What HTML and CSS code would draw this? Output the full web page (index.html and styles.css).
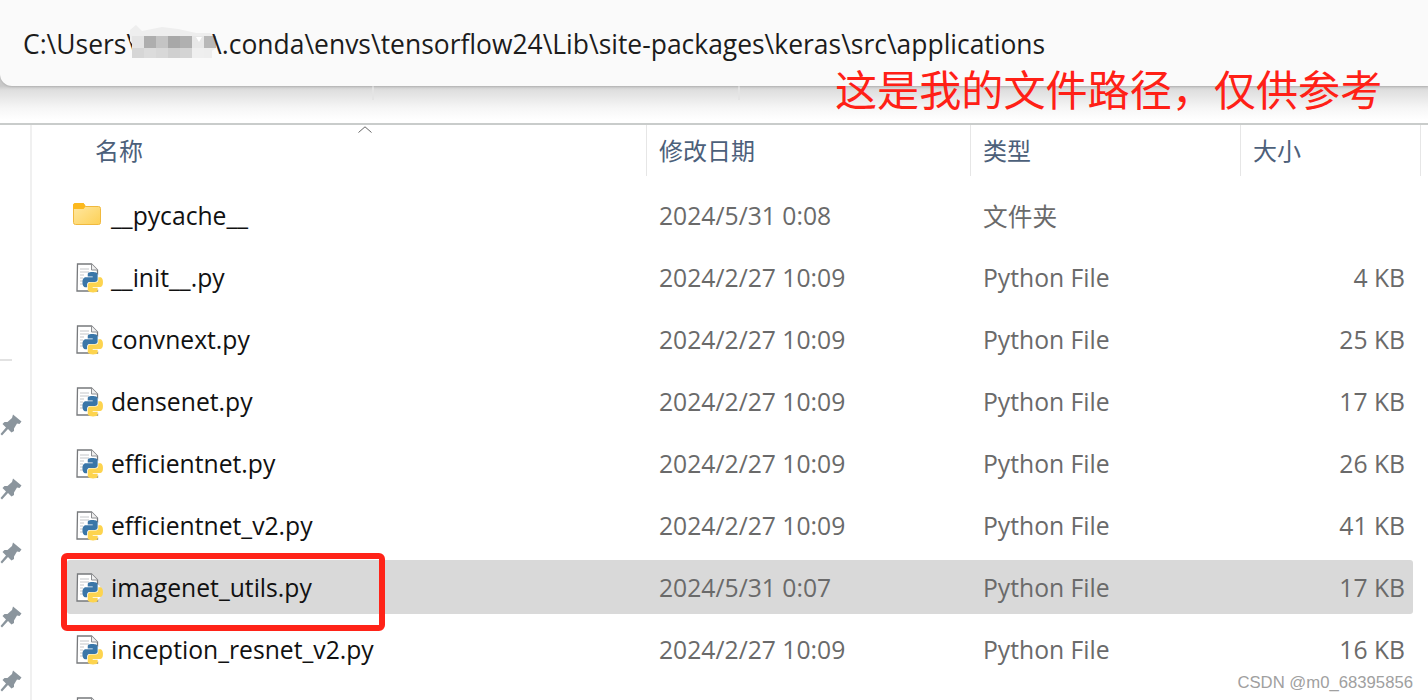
FILE: index.html
```html
<!DOCTYPE html>
<html lang="zh-CN">
<head>
<meta charset="utf-8">
<title>applications</title>
<link rel="stylesheet" href="styles.css">
</head>
<body>
<svg class="defs" width="0" height="0" aria-hidden="true">
  <symbol id="py" viewBox="0 0 27 30">
    <path d="M1.5 1h14l6 6v21h-20.500z" fill="#fff" stroke="#77797c" stroke-width="1.300"/>
    <path d="M15.500 1v6h6" fill="#eee" stroke="#8d8f92" stroke-width="1"/>
    <path d="M4 6h9M4 9h9M4 12h4M4 15h3M4 18h3M4 21h3" stroke="#c4c6c9" stroke-width="1"/>
    <g transform="translate(6.500 9) scale(.85)">
      <path fill="#fff" stroke="#fff" stroke-width="2" d="M2 12a10 10 0 1 0 20 0a10 10 0 1 0-20 0"/>
      <path fill="#3a76a8" d="M14.250.18l.9.2.73.26.59.3.45.32.34.34.25.34.16.33.1.3.04.26.02.2-.01.13V8.500l-.05.63-.13.55-.21.46-.26.38-.3.31-.33.25-.35.19-.35.14-.33.1-.3.07-.26.04-.21.02H8.770l-.69.05-.59.14-.5.22-.41.27-.33.32-.27.35-.2.36-.15.37-.1.35-.07.32-.04.27-.02.21v3.060H3.170l-.21-.03-.28-.07-.32-.12-.35-.18-.36-.26-.36-.36-.35-.46-.32-.59-.28-.73-.21-.88-.14-1.050-.05-1.230.06-1.220.16-1.040.24-.87.32-.71.36-.57.4-.44.42-.33.42-.24.4-.16.36-.1.32-.05.24-.01h.16l.06.01h8.160v-.83H6.180l-.01-2.750-.02-.37.05-.34.11-.31.17-.28.25-.26.31-.23.38-.2.44-.18.51-.15.58-.12.64-.1.71-.06.77-.04.84-.02 1.270.05z"/>
      <path fill="#fdd44f" d="M21.040 6.110l.28.06.32.12.35.18.36.27.36.35.35.47.32.59.28.73.21.88.14 1.040.05 1.230-.06 1.230-.16 1.040-.24.86-.32.71-.36.57-.4.45-.42.33-.42.24-.4.16-.36.09-.32.05-.24.02-.16-.01h-8.220v.82h5.840l.01 2.760.02.36-.05.34-.11.31-.17.29-.25.25-.31.24-.38.2-.44.17-.51.15-.58.13-.64.09-.71.07-.77.04-.84.01-1.270-.04-1.070-.14-.9-.2-.73-.25-.59-.3-.45-.33-.34-.34-.25-.34-.16-.33-.1-.3-.04-.25-.02-.2.01-.13v-5.340l.05-.64.13-.54.21-.46.26-.38.3-.32.33-.24.35-.2.35-.14.33-.1.3-.06.26-.04.21-.02.13-.01h5.840l.69-.05.59-.14.5-.21.41-.28.33-.32.27-.35.2-.36.15-.36.1-.35.07-.32.04-.28.02-.21V6.070h2.090z"/>
    </g>
  </symbol>
  <symbol id="pin" viewBox="0 0 22 22">
    <path d="M13 .5L21.500 7.500L19.500 10L17 9.500L14 14.500L14 17L11.500 18.500L8 15L2 21.500L.5 20L6 13.500L2.500 10L4.500 8L7.500 8L12 4Z" fill="#8b959d"/>
  </symbol>
  <linearGradient id="folderfill" x1="0" y1="0" x2="1" y2="1">
    <stop offset="0" stop-color="#ffe9a6"/>
    <stop offset="1" stop-color="#fdd055"/>
  </linearGradient>
</svg>

<header class="top">
  <div class="address">
    <span class="path">C:\Users\<svg class="mosaic" viewBox="0 0 92 38" aria-hidden="true">
      <path d="M2 6L8 1l6 6 20-4 16 2 18 4 14 0 6 5v10l-6 4-24 3-10 2-22 0-16-4-8-12z" fill="#eeeeee"/>
      <rect x="4" y="12" width="12" height="12" fill="#e4e4e4"/>
      <rect x="16" y="12" width="12" height="12" fill="#aeaeae"/>
      <rect x="28" y="12" width="12" height="12" fill="#c4c4c4"/>
      <rect x="40" y="12" width="12" height="12" fill="#a8a8a8"/>
      <rect x="52" y="12" width="12" height="12" fill="#b0b0b0"/>
      <rect x="64" y="12" width="12" height="12" fill="#e8e8e8"/>
      <rect x="76" y="12" width="12" height="12" fill="#b8b8b8"/>
      <rect x="4" y="24" width="12" height="10" fill="#d6d6d6"/>
      <rect x="16" y="24" width="12" height="10" fill="#dcdcdc"/>
      <rect x="28" y="24" width="12" height="10" fill="#d8d8d8"/>
      <rect x="40" y="24" width="12" height="10" fill="#d0d0d0"/>
      <rect x="52" y="24" width="12" height="10" fill="#d4d4d4"/>
      <rect x="64" y="24" width="12" height="10" fill="#efefef"/>
      <rect x="76" y="24" width="8" height="10" fill="#eeeeee"/>
      <path d="M68 13h6l-3 5z" fill="#fff"/>
    </svg>\.conda\envs\tensorflow24\Lib\site-packages\keras\src\applications</span>
  </div>
  <div class="ticks"><i class="tick"></i><i class="tick"></i></div>
</header>

<div class="body">
  <aside class="side">
    <i class="side-rule"></i>
    <div class="pins">
      <svg class="pin"><use href="#pin"/></svg>
      <svg class="pin"><use href="#pin"/></svg>
      <svg class="pin"><use href="#pin"/></svg>
      <svg class="pin"><use href="#pin"/></svg>
      <svg class="pin"><use href="#pin"/></svg>
    </div>
  </aside>
  <main class="list">
    <div class="head">
      <div class="hcell hname">名称</div>
      <div class="hcell">修改日期</div>
      <div class="hcell">类型</div>
      <div class="hcell hsize">大小</div>
      <svg class="sort" viewBox="0 0 14 7" aria-hidden="true"><path d="M.5 6.500L7 .8l6.500 5.700" fill="none" stroke="#666" stroke-width="1"/></svg>
    </div>
    <div class="rows">
      <div class="row">
        <div class="name"><svg class="folder" viewBox="0 0 28 22"><path d="M.5 2.500a2 2 0 0 1 2-2h8l2 3h13a2 2 0 0 1 2 2v14a2 2 0 0 1-2 2h-23a2 2 0 0 1-2-2z" fill="url(#folderfill)" stroke="#f0b93e"/><path d="M0 2.500a2.500 2.500 0 0 1 2.500-2.500h8l2 3.500-2 2.500h-10.500z" fill="#fcb91e"/></svg><span>__pycache__</span></div>
        <div class="cell">2024/5/31 0:08</div><div class="cell">文件夹</div><div class="cell size"></div>
      </div>
      <div class="row"><div class="name"><svg class="py"><use href="#py"/></svg><span>__init__.py</span></div><div class="cell">2024/2/27 10:09</div><div class="cell">Python File</div><div class="cell size">4 KB</div></div>
      <div class="row"><div class="name"><svg class="py"><use href="#py"/></svg><span>convnext.py</span></div><div class="cell">2024/2/27 10:09</div><div class="cell">Python File</div><div class="cell size">25 KB</div></div>
      <div class="row"><div class="name"><svg class="py"><use href="#py"/></svg><span>densenet.py</span></div><div class="cell">2024/2/27 10:09</div><div class="cell">Python File</div><div class="cell size">17 KB</div></div>
      <div class="row"><div class="name"><svg class="py"><use href="#py"/></svg><span>efficientnet.py</span></div><div class="cell">2024/2/27 10:09</div><div class="cell">Python File</div><div class="cell size">26 KB</div></div>
      <div class="row"><div class="name"><svg class="py"><use href="#py"/></svg><span>efficientnet_v2.py</span></div><div class="cell">2024/2/27 10:09</div><div class="cell">Python File</div><div class="cell size">41 KB</div></div>
      <div class="row selected"><div class="name"><svg class="py"><use href="#py"/></svg><span>imagenet_utils.py</span></div><div class="cell">2024/5/31 0:07</div><div class="cell">Python File</div><div class="cell size">17 KB</div></div>
      <div class="row"><div class="name"><svg class="py"><use href="#py"/></svg><span>inception_resnet_v2.py</span></div><div class="cell">2024/2/27 10:09</div><div class="cell">Python File</div><div class="cell size">16 KB</div></div>
      <div class="row"><div class="name"><svg class="py"><use href="#py"/></svg></div></div>
    </div>
  </main>
</div>

<div class="note">这是我的文件路径，仅供参考</div>
<div class="redbox"></div>
<div class="mark">CSDN @m0_68395856</div>
</body>
</html>
```
FILE: styles.css
```css
* { box-sizing: border-box; }
html, body { margin: 0; height: 700px; overflow: hidden; background: #fff; }
body { position: relative; font-family: "Open Sans", "Noto Sans CJK SC", sans-serif; font-size: 24.700px; color: #111; }
.defs { position: absolute; }

.top { height: 125px; border-bottom: 2px solid #c9cccb; background: linear-gradient(#c9c9c9 86px, #dedede 90px, #f6f6f6 108px, #fff 120px); }
.address { height: 86px; background: #fafafa; border-radius: 0 0 0 12px; display: flex; align-items: center; padding: 1px 0 0 23px; box-shadow: 0 1px 2px rgba(0,0,0,.12); position: relative; z-index: 1; }
.path { display: flex; align-items: center; color: #1c1c1c; white-space: nowrap; font-size: 26.450px; }
.mosaic { width: 92px; height: 38px; margin: -2px -8px 0 -8px; flex: none; }
.ticks { display: flex; gap: 364px; padding-left: 372px; }
.tick { width: 2px; height: 14px; background: #e4e4e4; }

.body { display: flex; height: 575px; overflow: hidden; }
.side { width: 32px; flex: none; border-right: 2px solid #f0f0f0; overflow: hidden; padding-top: 234px; }
.side-rule { display: block; width: 12px; height: 2px; background: #e2e2e2; }
.pins { display: flex; flex-direction: column; gap: 42px; padding-top: 53px; }
.pin { display: block; width: 22px; height: 22px; }

.list { flex: 1; min-width: 0; }
.head { display: grid; grid-template-columns: 615px 324px 270px 180px; height: 51px; position: relative; }
.hcell { border-right: 1px solid #e6e6e6; padding: 8px 0 0 12px; color: #4c607a; line-height: 36px; font-size: 24px; }
.hname { padding-left: 63px; }
.sort { position: absolute; left: 326px; top: 1px; width: 14px; height: 7px; }

.rows { display: flex; flex-direction: column; gap: 8px; padding: 12px 15px 0 35px; }
.row { display: grid; grid-template-columns: 579px 324px 270px 173px; height: 54px; flex: none; align-items: center; border-radius: 3px; color: #6a6a6a; }
.selected { background: #d9d9d9; }
.name { display: flex; align-items: center; padding-left: 9px; color: #111; white-space: nowrap; }
.name span { margin-left: 8px; }
.py { width: 27px; height: 30px; flex: none; margin-top: 1px; }
.folder { width: 28px; height: 22px; flex: none; margin: -2px 1px 0 -3px; }
.name .folder + span { margin-left: 9px; }
.cell { padding-left: 13px; white-space: nowrap; }
.size { text-align: right; padding-right: 8px; }

.note { position: absolute; z-index: 2; left: 835px; top: 61px; font-size: 42.100px; line-height: 54px; color: #ff2016; white-space: nowrap; font-family: "Noto Sans CJK SC", sans-serif; }
.redbox { position: absolute; left: 61px; top: 553px; width: 324px; height: 78px; border: 6px solid #ff2318; border-radius: 6px; }
.mark { position: absolute; right: 15px; top: 673px; font: 16.700px/20px "Liberation Sans", sans-serif; color: #a0a0a0; white-space: nowrap; }
```
